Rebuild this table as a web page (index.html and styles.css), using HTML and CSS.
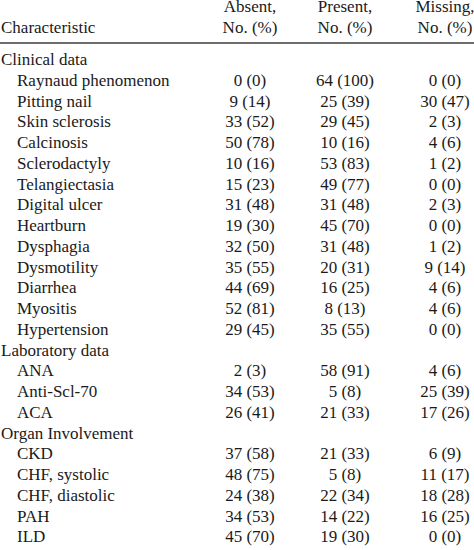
FILE: index.html
```html
<!DOCTYPE html>
<html lang="en">
<head>
<meta charset="utf-8">
<title>Characteristics</title>
<link rel="stylesheet" href="styles.css">
</head>
<body>
<div class="table">
  <div class="row head">
    <div class="label"><span class="l2">Characteristic</span></div>
    <div class="num"><span class="l1">Absent,</span><span class="l2">No. (%)</span></div>
    <div class="num"><span class="l1">Present,</span><span class="l2">No. (%)</span></div>
    <div class="num last"><span class="l1">Missing,</span><span class="l2">No. (%)</span></div>
  </div>
  <div class="body">
    <div class="row"><div class="label">Clinical data</div></div>
    <div class="row"><div class="label sub">Raynaud phenomenon</div><div class="num">0 (0)</div><div class="num">64 (100)</div><div class="num last">0 (0)</div></div>
    <div class="row"><div class="label sub">Pitting nail</div><div class="num">9 (14)</div><div class="num">25 (39)</div><div class="num last">30 (47)</div></div>
    <div class="row"><div class="label sub">Skin sclerosis</div><div class="num">33 (52)</div><div class="num">29 (45)</div><div class="num last">2 (3)</div></div>
    <div class="row"><div class="label sub">Calcinosis</div><div class="num">50 (78)</div><div class="num">10 (16)</div><div class="num last">4 (6)</div></div>
    <div class="row"><div class="label sub">Sclerodactyly</div><div class="num">10 (16)</div><div class="num">53 (83)</div><div class="num last">1 (2)</div></div>
    <div class="row"><div class="label sub">Telangiectasia</div><div class="num">15 (23)</div><div class="num">49 (77)</div><div class="num last">0 (0)</div></div>
    <div class="row"><div class="label sub">Digital ulcer</div><div class="num">31 (48)</div><div class="num">31 (48)</div><div class="num last">2 (3)</div></div>
    <div class="row"><div class="label sub">Heartburn</div><div class="num">19 (30)</div><div class="num">45 (70)</div><div class="num last">0 (0)</div></div>
    <div class="row"><div class="label sub">Dysphagia</div><div class="num">32 (50)</div><div class="num">31 (48)</div><div class="num last">1 (2)</div></div>
    <div class="row"><div class="label sub">Dysmotility</div><div class="num">35 (55)</div><div class="num">20 (31)</div><div class="num last">9 (14)</div></div>
    <div class="row"><div class="label sub">Diarrhea</div><div class="num">44 (69)</div><div class="num">16 (25)</div><div class="num last">4 (6)</div></div>
    <div class="row"><div class="label sub">Myositis</div><div class="num">52 (81)</div><div class="num">8 (13)</div><div class="num last">4 (6)</div></div>
    <div class="row"><div class="label sub">Hypertension</div><div class="num">29 (45)</div><div class="num">35 (55)</div><div class="num last">0 (0)</div></div>
    <div class="row"><div class="label">Laboratory data</div></div>
    <div class="row"><div class="label sub">ANA</div><div class="num">2 (3)</div><div class="num">58 (91)</div><div class="num last">4 (6)</div></div>
    <div class="row"><div class="label sub">Anti-Scl-70</div><div class="num">34 (53)</div><div class="num">5 (8)</div><div class="num last">25 (39)</div></div>
    <div class="row"><div class="label sub">ACA</div><div class="num">26 (41)</div><div class="num">21 (33)</div><div class="num last">17 (26)</div></div>
    <div class="row"><div class="label">Organ Involvement</div></div>
    <div class="row"><div class="label sub">CKD</div><div class="num">37 (58)</div><div class="num">21 (33)</div><div class="num last">6 (9)</div></div>
    <div class="row"><div class="label sub">CHF, systolic</div><div class="num">48 (75)</div><div class="num">5 (8)</div><div class="num last">11 (17)</div></div>
    <div class="row"><div class="label sub">CHF, diastolic</div><div class="num">24 (38)</div><div class="num">22 (34)</div><div class="num last">18 (28)</div></div>
    <div class="row"><div class="label sub">PAH</div><div class="num">34 (53)</div><div class="num">14 (22)</div><div class="num last">16 (25)</div></div>
    <div class="row"><div class="label sub">ILD</div><div class="num">45 (70)</div><div class="num">19 (30)</div><div class="num last">0 (0)</div></div>
  </div>
</div>
</body>
</html>
```

FILE: styles.css
```css
html, body {
  margin: 0;
  padding: 0;
  background: #ffffff;
  overflow: hidden;
}

body {
  font-family: "Liberation Serif", "Times New Roman", serif;
  font-size: 17px;
  color: #1a1a1a;
}

.table {
  width: 474px;
}

.row {
  display: grid;
  grid-template-columns: 200px 100px 90px 84px;
  line-height: 20.75px;
  white-space: nowrap;
}

.head {
  align-items: end;
  padding-bottom: 2px;
  border-bottom: 2px solid #6e6e6e;
}

.l1 {
  display: block;
  line-height: 14.5px;
}

.l2 {
  display: block;
  line-height: 25.5px;
}

.body {
  padding-top: 6px;
}

.label {
  padding-left: 1px;
}

.label.sub {
  padding-left: 17px;
}

.num {
  display: flex;
  flex-direction: column;
  align-items: center;
  text-align: center;
}

.num.last {
  padding-left: 26px;
}
```
